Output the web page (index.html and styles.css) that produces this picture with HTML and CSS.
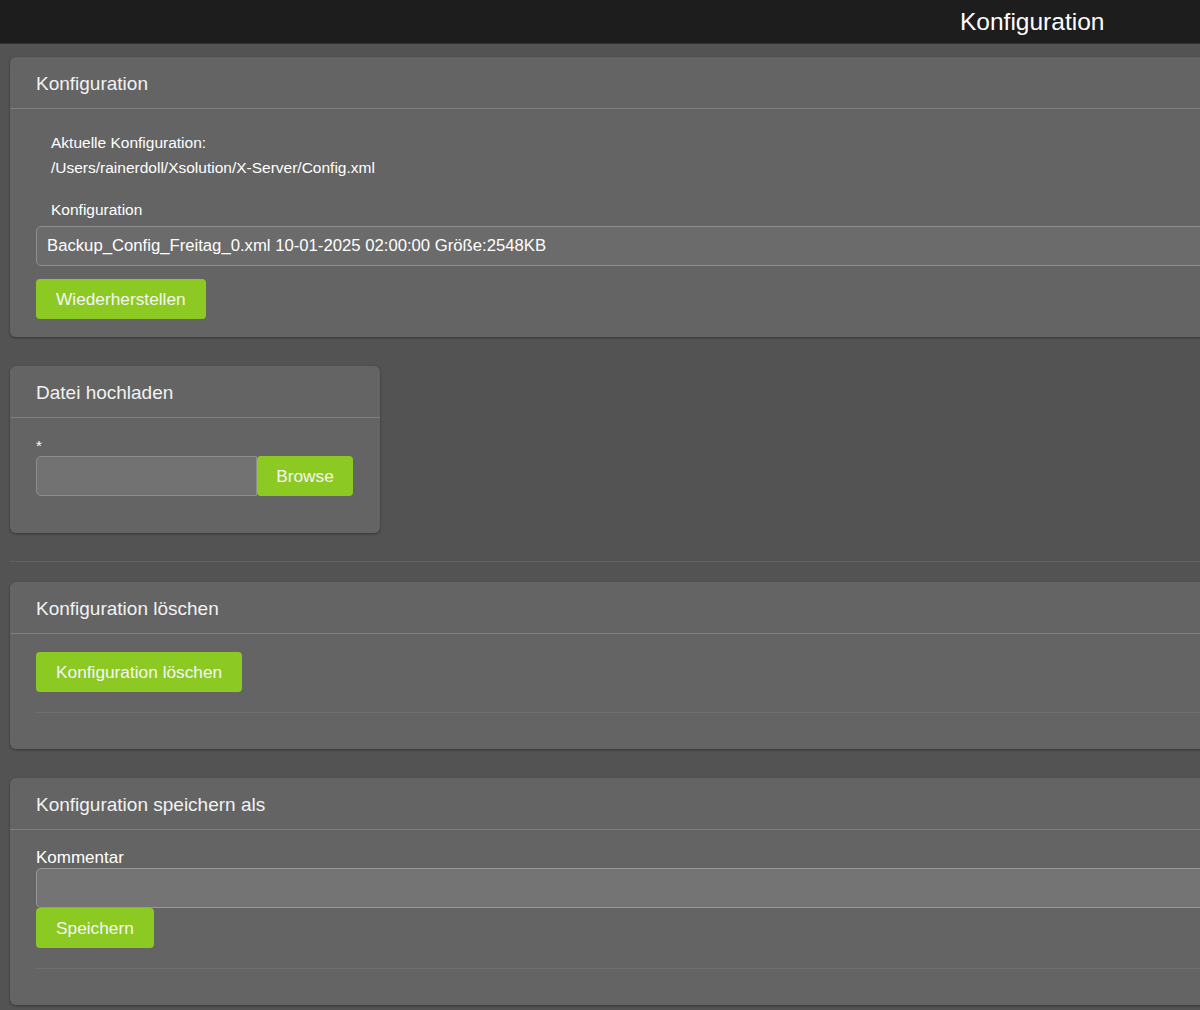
FILE: index.html
```html
<!DOCTYPE html>
<html lang="de">
<head>
<meta charset="utf-8">
<title>Konfiguration</title>
<link rel="stylesheet" href="styles.css">
</head>
<body>
<div class="page">
  <header class="topbar">
    <h1 class="topbar-title">Konfiguration</h1>
  </header>
  <main class="content">
    <section class="panel panel-restore">
      <div class="panel-head">Konfiguration</div>
      <div class="panel-body">
        <div class="info">
          <div class="info-line">Aktuelle Konfiguration:</div>
          <div class="info-line">/Users/rainerdoll/Xsolution/X-Server/Config.xml</div>
        </div>
        <label class="sub-label">Konfiguration</label>
        <div class="select">Backup_Config_Freitag_0.xml 10-01-2025 02:00:00 Größe:2548KB</div>
        <button class="btn btn-restore">Wiederherstellen</button>
      </div>
    </section>

    <section class="panel panel-upload">
      <div class="panel-head">Datei hochladen</div>
      <div class="panel-body upload-body">
        <div class="star">*</div>
        <div class="file-row">
          <div class="file-input"></div>
          <button class="btn btn-browse">Browse</button>
        </div>
      </div>
    </section>

    <hr class="divider">

    <section class="panel panel-delete">
      <div class="panel-head">Konfiguration löschen</div>
      <div class="panel-body delete-body">
        <button class="btn">Konfiguration löschen</button>
        <hr class="inner-rule">
      </div>
    </section>

    <section class="panel panel-save">
      <div class="panel-head">Konfiguration speichern als</div>
      <div class="panel-body save-body">
        <label class="field-label">Kommentar</label>
        <div class="text-input"></div>
        <button class="btn">Speichern</button>
        <hr class="inner-rule">
      </div>
    </section>
  </main>
</div>
</body>
</html>
```

FILE: styles.css
```css
html, body {
  margin: 0;
  padding: 0;
  background: #535353;
  overflow: hidden;
}

body {
  font-family: "Liberation Sans", Arial, Helvetica, sans-serif;
  color: #ffffff;
  width: 1200px;
  height: 1010px;
}

.page {
  width: 2064px;
}

.topbar {
  height: 43px;
  background: #1d1d1d;
  border-bottom: 1px solid #333333;
  display: flex;
  align-items: center;
  padding-left: 960px;
}

.topbar-title {
  margin: 0;
  font-size: 24.5px;
  font-weight: normal;
  color: #ffffff;
  line-height: 41px;
}

.content {
  padding: 13px 10px 0 10px;
  display: flex;
  flex-direction: column;
}

.panel {
  background: #646464;
  border-radius: 6px;
  box-shadow: 0 1px 3px rgba(0, 0, 0, 0.35);
}

.panel-head {
  height: 51px;
  line-height: 54px;
  padding: 0 26px;
  font-size: 19px;
  color: #f2f2f2;
  border-bottom: 1px solid #7e7e7e;
}

.panel-body {
  padding: 21px 26px 18px 26px;
  display: flex;
  flex-direction: column;
  align-items: flex-start;
}

.info {
  padding-left: 15px;
  font-size: 15.5px;
  line-height: 25px;
}

.sub-label {
  margin-top: 20px;
  padding-left: 15px;
  font-size: 15.5px;
  line-height: 20px;
  margin-bottom: 6px;
}

.select {
  align-self: stretch;
  box-sizing: border-box;
  height: 40px;
  background: #6b6b6b;
  border: 1px solid #8e8e8e;
  border-radius: 5px;
  padding: 0 10px;
  font-size: 16.7px;
  line-height: 38px;
  color: #ffffff;
  margin-bottom: 13px;
}

.btn {
  height: 40px;
  padding: 0 20px;
  border: none;
  border-radius: 4px;
  background: #8dc923;
  color: #f5f5f5;
  font-family: "Liberation Sans", Arial, Helvetica, sans-serif;
  font-size: 17.3px;
  cursor: pointer;
}

.panel-upload {
  width: 370px;
  margin-top: 29px;
}

.upload-body {
  padding-top: 18px;
  padding-bottom: 37px;
}

.star {
  font-size: 15px;
  line-height: 20px;
}

.file-row {
  display: flex;
}

.file-input {
  width: 221px;
  height: 40px;
  box-sizing: border-box;
  background: #727272;
  border: 1px solid #8e8e8e;
  border-radius: 5px 0 0 5px;
}

.btn-browse {
  width: 96px;
  padding: 0;
  border-radius: 4px;
}

.divider {
  margin: 28px 0 0 0;
  border: none;
  border-top: 1px solid #626262;
  height: 0;
}

.panel-delete {
  margin-top: 20px;
}

.delete-body {
  padding-top: 18px;
  padding-bottom: 36px;
}

.inner-rule {
  align-self: stretch;
  margin: 20px 0 0 0;
  border: none;
  border-top: 1px solid #6f6f6f;
  height: 0;
}

.panel-save {
  margin-top: 29px;
}

.save-body {
  padding-top: 17px;
  padding-bottom: 36px;
}

.field-label {
  font-size: 17px;
  line-height: 21px;
}

.text-input {
  align-self: stretch;
  box-sizing: border-box;
  height: 40px;
  background: #747474;
  border: 1px solid #989898;
  border-radius: 5px;
}
```
